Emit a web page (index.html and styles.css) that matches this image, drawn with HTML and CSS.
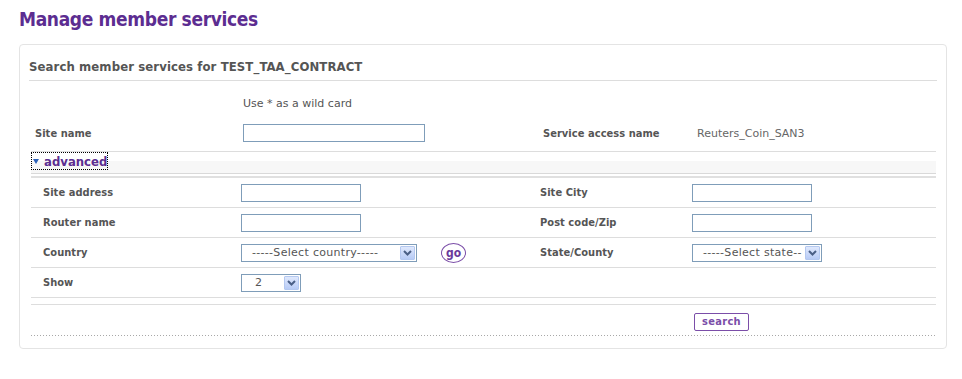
FILE: index.html
```html
<!DOCTYPE html>
<html>
<head>
<meta charset="utf-8">
<title>Manage member services</title>
<link rel="stylesheet" href="styles.css">
</head>
<body>
<h1 class="page-title">Manage member services</h1>
<div class="panel">
  <h2 class="panel-title">Search member services for TEST_TAA_CONTRACT</h2>
  <div class="basic">
    <div class="hint-row"><span class="hint">Use * as a wild card</span></div>
    <div class="row basic-row">
      <span class="label">Site name</span>
      <span class="cell"><span class="input wide"></span></span>
      <span class="label">Service access name</span>
      <span class="value">Reuters_Coin_SAN3</span>
    </div>
  </div>
  <div class="adv-bar">
    <a class="adv-link" href="#"><span class="tri"><svg width="6" height="5" viewBox="0 0 6 5"><path d="M0 0 H6 L3 5 Z" fill="#2a60b8"/></svg></span>advanced</a>
  </div>
  <div class="adv">
    <div class="row adv-row">
      <span class="label">Site address</span>
      <span class="cell"><span class="input"></span></span>
      <span class="label">Site City</span>
      <span class="cell"><span class="input"></span></span>
    </div>
    <div class="row adv-row">
      <span class="label">Router name</span>
      <span class="cell"><span class="input"></span></span>
      <span class="label">Post code/Zip</span>
      <span class="cell"><span class="input"></span></span>
    </div>
    <div class="row adv-row">
      <span class="label">Country</span>
      <span class="cell country-cell">
        <span class="select country"><span class="sel-text">-----Select country-----</span><span class="arrow"><svg width="9" height="6" viewBox="0 0 9 6"><path d="M1 1 L4.5 4.5 L8 1" fill="none" stroke="#4a5f86" stroke-width="2"/></svg></span></span>
        <span class="go">go</span>
      </span>
      <span class="label">State/County</span>
      <span class="cell"><span class="select state"><span class="sel-text">-----Select state--</span><span class="arrow"><svg width="9" height="6" viewBox="0 0 9 6"><path d="M1 1 L4.5 4.5 L8 1" fill="none" stroke="#4a5f86" stroke-width="2"/></svg></span></span></span>
    </div>
    <div class="row adv-row">
      <span class="label">Show</span>
      <span class="cell"><span class="select show"><span class="sel-text">2</span><span class="arrow"><svg width="9" height="6" viewBox="0 0 9 6"><path d="M1 1 L4.5 4.5 L8 1" fill="none" stroke="#4a5f86" stroke-width="2"/></svg></span></span></span>
      <span class="label"></span>
      <span class="cell"></span>
    </div>
  </div>
  <div class="actions">
    <span class="btn">search</span>
  </div>
</div>
</body>
</html>
```

FILE: styles.css
```css
html, body {
  margin: 0;
  padding: 0;
  background: #ffffff;
}
body {
  padding: 0 16px 0 19px;
  font-family: "DejaVu Sans", Verdana, sans-serif;
  font-size: 11px;
  color: #555555;
}
.page-title {
  margin: 0;
  height: 44px;
  padding-top: 7px;
  box-sizing: border-box;
  font-family: "DejaVu Sans Condensed", "DejaVu Sans", sans-serif;
  font-weight: bold;
  font-size: 19px;
  letter-spacing: -0.35px;
  color: #5c2d91;
  line-height: 24px;
}
.panel {
  width: 928px;
  height: 305px;
  box-sizing: border-box;
  border: 1px solid #e4e4e4;
  border-radius: 4px;
  padding: 0 9px;
  background: #ffffff;
}
.panel-title {
  margin: 0;
  height: 36px;
  box-sizing: border-box;
  padding-top: 14px;
  border-bottom: 1px solid #dddddd;
  font-family: "DejaVu Sans Condensed", "DejaVu Sans", sans-serif;
  font-weight: bold;
  font-size: 13px;
  letter-spacing: 0.1px;
  line-height: 16px;
  color: #555555;
}
.basic {
  margin: 0 1px 0 2px;
}
.hint-row {
  height: 35px;
  padding-left: 212px;
  box-sizing: border-box;
  padding-top: 16px;
  line-height: 14px;
}
.row {
  display: grid;
  align-items: center;
  border-bottom: 1px solid #dddddd;
}
.basic-row {
  grid-template-columns: 212px 300px 154px 1fr;
  height: 36px;
  box-sizing: border-box;
  padding-bottom: 2px;
}
.basic-row > .label,
.basic-row > .value {
  padding-top: 2px;
}
.basic-row > .label:first-child {
  padding-left: 4px;
}
.label {
  font-family: "DejaVu Sans Condensed", "DejaVu Sans", sans-serif;
  font-weight: bold;
  font-size: 11px;
  letter-spacing: 0.05px;
  color: #555555;
}
.value {
  color: #666666;
}
.input {
  display: block;
  width: 120px;
  height: 18px;
  box-sizing: border-box;
  border: 1px solid #7f9db9;
  background: #ffffff;
}
.input.wide {
  width: 182px;
}
.adv-bar {
  margin: 0 1px 0 2px;
  height: 22px;
  box-sizing: border-box;
  border-bottom: 1px solid #d9d9d9;
  background: linear-gradient(#ffffff 0, #ffffff 9px, #f7f7f7 9px);
}
.adv-link {
  display: inline-flex;
  align-items: center;
  height: 18px;
  box-sizing: border-box;
  outline: 1px dotted #000000;
  outline-offset: -1px;
  padding: 0 1px 0 2px;
  font-family: "DejaVu Sans Condensed", "DejaVu Sans", sans-serif;
  font-weight: bold;
  font-size: 13px;
  letter-spacing: 0;
  line-height: 17px;
  color: #5c2d91;
  text-decoration: none;
}
.tri {
  display: inline-flex;
  margin: 0 5px 0 0;
  padding-top: 1px;
}
.adv {
  margin: 2px 1px 0 2px;
  border-top: 2px solid #e0e0e0;
}
.adv-row {
  grid-template-columns: 210px 299px 152px 1fr;
  height: 30px;
  box-sizing: border-box;
}
.adv-row > .label:first-child {
  padding-left: 12px;
}
.country-cell {
  display: flex;
  align-items: center;
}
.select {
  display: flex;
  align-items: center;
  height: 18px;
  box-sizing: border-box;
  border: 1px solid #7f9db9;
  background: #ffffff;
  padding: 0 1px 0 10px;
  color: #555555;
  line-height: 14px;
}
.select.country {
  width: 176px;
  letter-spacing: 0.3px;
}
.select.state {
  width: 130px;
  padding-left: 10px;
  letter-spacing: 0.3px;
}
.select.show {
  width: 60px;
  padding-left: 13px;
}
.sel-text {
  flex: 1;
  white-space: nowrap;
}
.arrow {
  flex: none;
  width: 15px;
  height: 14px;
  box-sizing: border-box;
  border: 1px solid #b4c8f0;
  border-radius: 1px;
  background: linear-gradient(#dfe8fc, #b7cbf6);
  display: flex;
  align-items: center;
  justify-content: center;
}
.go {
  display: inline-flex;
  align-items: center;
  justify-content: center;
  width: 23px;
  height: 18px;
  margin-left: 24px;
  border: 1px solid #7b4ea8;
  border-radius: 50%;
  font-family: "DejaVu Sans Condensed", "DejaVu Sans", sans-serif;
  font-weight: bold;
  font-size: 12px;
  color: #6a3b9c;
  line-height: 14px;
}
.actions {
  margin: 6px 1px 0 2px;
  border-top: 1px solid #dddddd;
  height: 32px;
  box-sizing: border-box;
  padding-top: 8px;
  padding-left: 663px;
  background-image: linear-gradient(to right, #a8a8a8 1px, transparent 1px);
  background-size: 3px 1px;
  background-repeat: repeat-x;
  background-position: 0 100%;
}
.btn {
  display: inline-flex;
  align-items: center;
  justify-content: center;
  width: 55px;
  height: 18px;
  box-sizing: border-box;
  border: 1px solid #7b4ea8;
  border-radius: 2px;
  font-family: "DejaVu Sans Condensed", "DejaVu Sans", sans-serif;
  font-weight: bold;
  font-size: 11px;
  letter-spacing: 0.3px;
  color: #7b4ea8;
  line-height: 14px;
}
```
